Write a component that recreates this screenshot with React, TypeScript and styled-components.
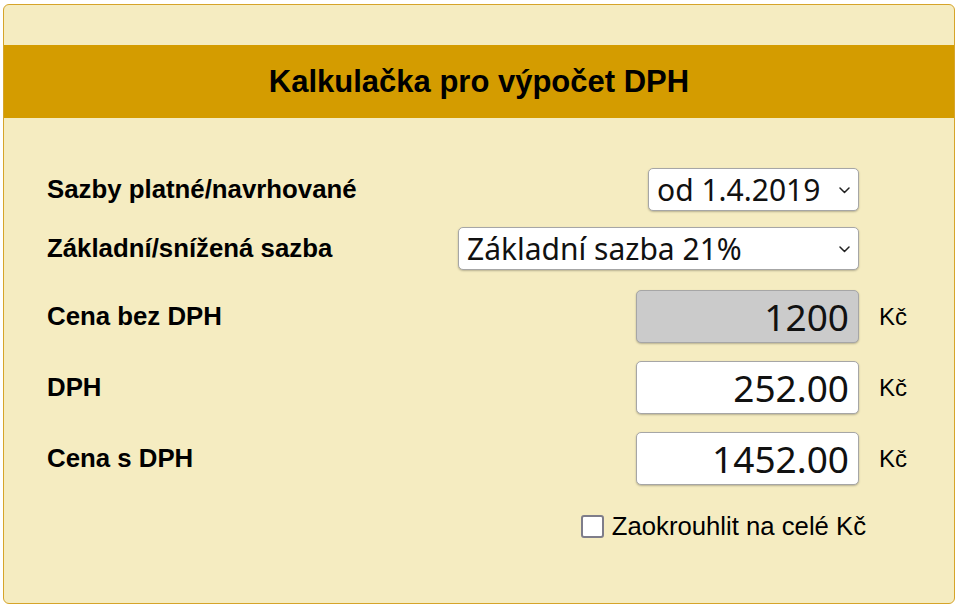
import React from "react";
import styled, { createGlobalStyle } from "styled-components";

const Global = createGlobalStyle`
  html, body { margin: 0; padding: 0; background: #ffffff; }
  body { font-family: "Liberation Sans", Arial, sans-serif; }
  * { box-sizing: border-box; }
`;

const Page = styled.div`
  padding: 4px 5px 0 3px;
  width: 960px;
  height: 610px;
  overflow: hidden;
`;

const Card = styled.div`
  width: 952px;
  height: 600px;
  background: #f5ecc1;
  border: 1px solid #d6a429;
  border-radius: 6px;
  display: flex;
  flex-direction: column;
  overflow: hidden;
`;

const Header = styled.div`
  margin-top: 40px;
  height: 73px;
  background: #d49c00;
  display: flex;
  align-items: center;
  justify-content: center;
`;

const Title = styled.h1`
  margin: 0;
  font-family: "Liberation Sans", Arial, sans-serif;
  font-weight: 700;
  font-size: 31px;
  color: #000;
`;

const Form = styled.div`
  display: flex;
  flex-direction: column;
  padding: 0 20px 0 43px;
`;

const Row = styled.div<{ $mt: number; $h: number }>`
  margin-top: ${(p) => p.$mt}px;
  height: ${(p) => p.$h}px;
  display: grid;
  grid-template-columns: 1fr auto 75px;
  align-items: center;
`;

const Label = styled.label`
  font-family: "Liberation Sans", Arial, sans-serif;
  font-weight: 700;
  font-size: 25.8px;
  color: #000;
  white-space: nowrap;
`;

const Unit = styled.span`
  padding-left: 20px;
  font-family: "Liberation Sans", Arial, sans-serif;
  font-size: 24px;
  color: #000;
`;

const SelectWrap = styled.div<{ $w: number }>`
  position: relative;
  width: ${(p) => p.$w}px;
  height: 100%;
  justify-self: end;
`;

const Select = styled.select`
  appearance: none;
  -webkit-appearance: none;
  width: 100%;
  height: 100%;
  margin: 0;
  padding: 0 30px 0 8px;
  font-family: "Noto Sans", "Open Sans", sans-serif;
  font-size: 30px;
  color: #111;
  background: #ffffff;
  border: 1px solid #a6a6a6;
  border-radius: 5px;
  box-shadow: 0 1px 2px rgba(0, 0, 0, 0.25);
  outline: none;
`;

const Chevron = styled.svg`
  position: absolute;
  right: 9px;
  top: 50%;
  margin-top: -3px;
  width: 11px;
  height: 7px;
  pointer-events: none;
`;

const Input = styled.input<{ $disabled?: boolean }>`
  justify-self: end;
  width: 223px;
  height: 100%;
  margin: 0;
  padding: 0 9px 0 8px;
  text-align: right;
  font-family: "Noto Sans", "Open Sans", sans-serif;
  font-size: 37px;
  color: #111;
  background: ${(p) => (p.$disabled ? "#cbcbcb" : "#ffffff")};
  border: 1px solid #a6a6a6;
  border-radius: 5px;
  box-shadow: 0 1px 2px rgba(0, 0, 0, 0.25);
  outline: none;
`;

const CheckRow = styled.div`
  margin-top: 33px;
  height: 23px;
  display: flex;
  align-items: center;
  justify-content: flex-end;
  padding-right: 68px;
  gap: 8px;
`;

const Box = styled.span`
  width: 23px;
  height: 23px;
  background: #ffffff;
  border: 2px solid #7e7d8a;
  border-radius: 3px;
`;

const CheckText = styled.span`
  font-family: "Liberation Sans", Arial, sans-serif;
  font-size: 25.7px;
  color: #000;
  white-space: nowrap;
`;

const ChevronIcon = () => (
  <Chevron viewBox="0 0 11 7">
    <path d="M1 1 L5.5 5.5 L10 1" fill="none" stroke="#222" strokeWidth="1.5" strokeLinecap="round" strokeLinejoin="round" />
  </Chevron>
);

export default function App() {
  return (
    <>
      <Global />
      <Page>
        <Card>
          <Header>
            <Title>Kalkulačka pro výpočet DPH</Title>
          </Header>
          <Form>
            <Row $mt={50} $h={43}>
              <Label>Sazby platné/navrhované</Label>
              <SelectWrap $w={211}>
                <Select defaultValue="2019">
                  <option value="2019">od 1.4.2019</option>
                </Select>
                <ChevronIcon />
              </SelectWrap>
              <span />
            </Row>
            <Row $mt={16} $h={43}>
              <Label>Základní/snížená sazba</Label>
              <SelectWrap $w={401}>
                <Select defaultValue="21">
                  <option value="21">Základní sazba 21%</option>
                </Select>
                <ChevronIcon />
              </SelectWrap>
              <span />
            </Row>
            <Row $mt={20} $h={49}>
              <Label>Cena bez DPH</Label>
              <Input $disabled readOnly defaultValue="1200" />
              <Unit>Kč</Unit>
            </Row>
            <Row $mt={22} $h={50}>
              <Label>DPH</Label>
              <Input readOnly defaultValue="252.00" />
              <Unit>Kč</Unit>
            </Row>
            <Row $mt={21} $h={50}>
              <Label>Cena s DPH</Label>
              <Input readOnly defaultValue="1452.00" />
              <Unit>Kč</Unit>
            </Row>
            <CheckRow>
              <Box />
              <CheckText>Zaokrouhlit na celé Kč</CheckText>
            </CheckRow>
          </Form>
        </Card>
      </Page>
    </>
  );
}
